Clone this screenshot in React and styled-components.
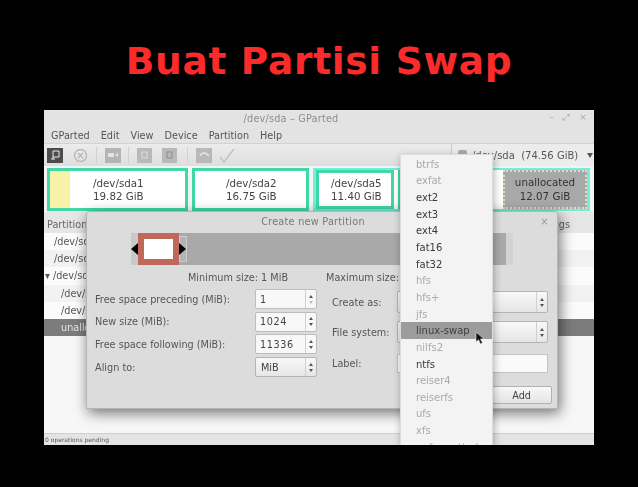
import styled, { createGlobalStyle } from "styled-components";

const Global = createGlobalStyle`
  html, body { margin: 0; padding: 0; background: #000; }
  body { font-family: "DejaVu Sans", sans-serif; overflow: hidden; }
`;

const Page = styled.div`
  width: 638px;
  height: 487px;
  background: #000;
  overflow: hidden;
`;

const Title = styled.h1`
  margin: 0;
  height: 110px;
  padding-top: 38px;
  box-sizing: border-box;
  text-align: center;
  color: #fb2b2b;
  font-size: 37.5px;
  line-height: 46px;
  font-weight: 700;
  letter-spacing: 0.7px;
`;

const Win = styled.div`
  position: relative;
  width: 550px;
  height: 335px;
  margin-left: 44px;
  background: #f6f6f6;
  display: flex;
  flex-direction: column;
  color: #4a4a4a;
  font-size: 9.7px;
  filter: blur(0.35px);
  overflow: hidden;
`;

const TitleBar = styled.div`
  height: 17px;
  flex: none;
  display: flex;
  align-items: center;
  justify-content: center;
  position: relative;
  box-sizing: border-box;
  padding-right: 56px;
  background: #e3e3e3;
  color: #8e8e8e;
  letter-spacing: 0.2px;
`;

const WinBtns = styled.div`
  position: absolute;
  right: 7px;
  top: 2px;
  display: flex;
  gap: 9px;
  color: #aaa;
  font-size: 9px;
`;

const MenuBar = styled.div`
  height: 16px;
  flex: none;
  display: flex;
  align-items: center;
  gap: 11px;
  padding-left: 7px;
  background: #e3e3e3;
  color: #555;
`;

const ToolBar = styled.div`
  height: 23px;
  flex: none;
  display: flex;
  align-items: center;
  padding-left: 3px;
  background: linear-gradient(#ececec, #dedede);
  border-top: 1px solid #d2d2d2;
  box-sizing: border-box;
`;

const Tool = styled.div`
  width: ${(p) => p.$w || 16}px;
  height: 15px;
  margin-right: ${(p) => p.$gap || 6}px;
  display: flex;
  align-items: center;
  justify-content: center;
  background: ${(p) => p.$bg || "transparent"};
  flex: none;
`;

const Sep = styled.div`
  width: 1px;
  height: 16px;
  background: #d0d0d0;
  margin-right: 8px;
`;

const DevicePicker = styled.div`
  margin-left: auto;
  width: 143px;
  height: 23px;
  box-sizing: border-box;
  padding-left: 6px;
  display: flex;
  align-items: center;
  gap: 5px;
  font-size: 10px;
  color: #555;
  white-space: pre;
  border-left: 1px solid #c8c8c8;
  background: #ececec;
`;

const DiskIcon = styled.div`
  width: 9px;
  height: 10px;
  flex: none;
  border-radius: 2px;
  background: #aaa;
`;

const PartBar = styled.div`
  height: 46px;
  flex: none;
  display: flex;
  padding: 2px 4px 1px 3px;
  box-sizing: border-box;
  gap: 4px;
  background: #f4f4f4;
`;

const Part = styled.div`
  position: relative;
  width: ${(p) => p.$w}px;
  box-sizing: border-box;
  flex: none;
  border: 3px solid #3fd8a6;
  background: #fff;
  padding: 1px 0 0 ${(p) => p.$pad}px;
  display: flex;
  flex-direction: column;
  justify-content: center;
  color: #444;
  font-size: 10.3px;
  line-height: 13.5px;
`;

const UsedArea = styled.div`
  position: absolute;
  left: 0;
  top: 0;
  bottom: 0;
  width: 20px;
  background: #f6f3a8;
`;

const Extended = styled.div`
  flex: 1;
  display: flex;
  gap: 4px;
  border: 2px solid #6ff0dc;
  border-width: 2px 3px;
  background: #fff;
`;

const Unallocated = styled.div`
  margin-left: auto;
  width: 84px;
  box-sizing: border-box;
  border: 2px dotted #e2dcb4;
  background: #a8a8a8;
  display: flex;
  flex-direction: column;
  align-items: center;
  justify-content: center;
  color: #333;
  font-size: 10.3px;
  line-height: 13.5px;
`;

const TableHead = styled.div`
  height: 21px;
  flex: none;
  box-sizing: border-box;
  display: flex;
  align-items: center;
  padding: 3px 24px 0 3px;
  background: #e6e6e6;
  color: #666;
  justify-content: space-between;
`;

const Row = styled.div`
  height: 17.2px;
  flex: none;
  display: flex;
  align-items: center;
  padding-left: ${(p) => p.$indent}px;
  background: ${(p) => (p.$selected ? "#7c7c7c" : p.$odd ? "#f2f2f2" : "#fbfbfb")};
  color: ${(p) => (p.$selected ? "#e8e8e8" : "#555")};
`;

const Spacer = styled.div`
  flex: 1;
  background: #f7f7f7;
`;

const StatusBar = styled.div`
  height: 12px;
  flex: none;
  border-top: 1px solid #cfcfcf;
  box-sizing: border-box;
  background: #e4e4e4;
  font-size: 6px;
  line-height: 11px;
  color: #555;
  padding-left: 1px;
`;

const Dialog = styled.div`
  position: absolute;
  left: 42px;
  top: 101px;
  width: 472px;
  height: 198px;
  box-sizing: border-box;
  background: #dcdcdc;
  border: 1px solid #b5b5b5;
  border-radius: 3px 3px 0 0;
  box-shadow: 2px 4px 14px rgba(0, 0, 0, 0.55);
  display: flex;
  flex-direction: column;
`;

const DialogTitle = styled.div`
  position: relative;
  height: 21px;
  flex: none;
  box-sizing: border-box;
  padding-right: 18px;
  text-align: center;
  line-height: 19px;
  color: #777;
  letter-spacing: 0.25px;
`;

const CloseX = styled.span`
  position: absolute;
  right: 8px;
  top: 0;
  color: #999;
  font-size: 10px;
`;

const Slider = styled.div`
  position: relative;
  height: 32px;
  flex: none;
  margin: 0 44px 0 44px;
  padding-left: 7px;
  background: linear-gradient(to right, #c9c9c9 7px, #a9a9a9 7px, #a9a9a9 375px, #d3d3d3 375px);
  display: flex;
`;

const SlideBox = styled.div`
  width: 41px;
  height: 32px;
  box-sizing: border-box;
  border: 6px solid #c0685c;
  background: #fff;
`;

const Handle = styled.div`
  position: absolute;
  left: 48px;
  top: 3px;
  width: 8px;
  height: 26px;
  box-sizing: border-box;
  background: #b4b4b4;
  border: 1px solid #cdcdcd;
`;

const Arrow = styled.div`
  position: absolute;
  top: 10px;
  ${(p) => (p.$right ? "left: 48px;" : "left: 0;")}
  width: 0;
  height: 0;
  border-top: 6px solid transparent;
  border-bottom: 6px solid transparent;
  ${(p) => (p.$right ? "border-left: 7px solid #000;" : "border-right: 7px solid #000;")}
`;

const SizeRow = styled.div`
  height: 22px;
  flex: none;
  display: flex;
  align-items: center;
  padding: 2px 0 0 101px;
  box-sizing: border-box;
  gap: 38px;
  color: #555;
`;

const Columns = styled.div`
  display: flex;
  flex: 1;
  padding: 0 6px 0 8px;
`;

const LeftCol = styled.div`
  width: 222px;
  flex: none;
  display: grid;
  grid-template-columns: 160px 62px;
  grid-auto-rows: 22.6px;
  align-items: center;
  align-content: start;
  padding-top: 1px;
`;

const RightCol = styled.div`
  position: relative;
  flex: 1;
  margin-left: 15px;
  display: grid;
  grid-template-columns: 65px 1fr;
  grid-template-rows: 30px 30px 33px;
  align-items: center;
  align-content: start;
  padding-right: 3px;
`;

const Label = styled.span`
  color: #555;
`;

const Spin = styled.div`
  width: 62px;
  height: 20px;
  box-sizing: border-box;
  display: flex;
  align-items: center;
  background: #f8f8f8;
  border: 1px solid #bdbdbd;
  border-radius: 2px;
  padding-left: 4px;
  color: #444;
  letter-spacing: ${(p) => (p.$wide ? "0.6px" : "0")};
`;

const SpinArrows = styled.div`
  margin-left: auto;
  width: 10px;
  height: 100%;
  flex: none;
  border-left: 1px solid #d0d0d0;
  display: flex;
  flex-direction: column;
  align-items: center;
  justify-content: center;
  gap: 3px;
`;

const Tri = styled.i`
  width: 0;
  height: 0;
  flex: none;
  border-left: 2.5px solid transparent;
  border-right: 2.5px solid transparent;
  ${(p) =>
    p.$down
      ? `border-top: 3px solid ${p.$dim ? "#bbb" : "#555"};`
      : `border-bottom: 3px solid ${p.$dim ? "#bbb" : "#555"};`}
`;

const DeviceArrow = styled(Tri)`
  margin-left: 4px;
  border-left-width: 3px;
  border-right-width: 3px;
  border-top-width: 5px;
`;

const Combo = styled.div`
  height: 22px;
  box-sizing: border-box;
  display: flex;
  align-items: center;
  justify-content: flex-end;
  background: linear-gradient(#f8f8f8, #e6e6e6);
  border: 1px solid #b5b5b5;
  border-radius: 2px;
  padding-left: 5px;
  color: #444;
`;

const AlignCombo = styled(Combo)`
  width: 62px;
  height: 20px;
  justify-content: space-between;
`;

const TextInput = styled.div`
  height: 19px;
  box-sizing: border-box;
  background: #fafafa;
  border: 1px solid #c4c4c4;
`;

const AddBtn = styled.div`
  position: absolute;
  right: -1px;
  top: 99px;
  width: 60px;
  height: 18px;
  box-sizing: border-box;
  display: flex;
  align-items: center;
  justify-content: flex-end;
  padding-right: 20px;
  background: linear-gradient(#f8f8f8, #e4e4e4);
  border: 1px solid #b2b2b2;
  border-radius: 2px;
  color: #444;
`;

const Menu = styled.div`
  position: absolute;
  left: 356px;
  top: 44px;
  width: 93px;
  bottom: 0;
  padding-top: 1px;
  background: #f3f3f3;
  border: 1px solid #dcdcdc;
  border-bottom: none;
  box-sizing: border-box;
  box-shadow: 1px 3px 8px rgba(0, 0, 0, 0.3);
  overflow: hidden;
`;

const MenuItem = styled.div`
  height: 16.65px;
  padding-left: 15px;
  display: flex;
  align-items: center;
  font-size: 10px;
  color: ${(p) => (p.$on ? "#3a3a3a" : "#aaa")};
  ${(p) => p.$hover && "background: #9c9c9c; color: #3f3f3f;"}
`;

const Cursor = styled.svg`
  position: absolute;
  left: 431px;
  top: 221px;
`;

const FS = [
  ["btrfs"], ["exfat"], ["ext2", 1], ["ext3", 1], ["ext4", 1], ["fat16", 1], ["fat32", 1],
  ["hfs"], ["hfs+"], ["jfs"], ["linux-swap", 1, 1], ["nilfs2"], ["ntfs", 1], ["reiser4"],
  ["reiserfs"], ["ufs"], ["xfs"], ["unformatted"],
];

const ROWS = [
  ["/dev/sda1", 10],
  ["/dev/sda2", 10],
  ["▾ /dev/sda3", 1],
  ["/dev/sda5", 17],
  ["/dev/sda6", 17],
  ["unallocated", 17],
];

function Spinner({ value, wide, dim }) {
  return (
    <Spin $wide={wide}>
      {value}
      <SpinArrows>
        <Tri />
        <Tri $down $dim={dim} />
      </SpinArrows>
    </Spin>
  );
}

function ComboArrows() {
  return (
    <SpinArrows>
      <Tri />
      <Tri $down />
    </SpinArrows>
  );
}

export default function App() {
  return (
    <Page>
      <Global />
      <Title>Buat Partisi Swap</Title>
      <Win>
        <TitleBar>
          /dev/sda – GParted
          <WinBtns>
            <span>–</span>
            <span>⤢</span>
            <span>×</span>
          </WinBtns>
        </TitleBar>
        <MenuBar>
          <span>GParted</span>
          <span>Edit</span>
          <span>View</span>
          <span>Device</span>
          <span>Partition</span>
          <span>Help</span>
        </MenuBar>
        <ToolBar>
          <Tool $bg="#4c4c4c" $gap={9}>
            <svg width="10" height="10" viewBox="0 0 10 10" fill="none" stroke="#eee">
              <path d="M3 1h6v6H3zM3 7v2M1 9h4" />
            </svg>
          </Tool>
          <Tool $gap={8}>
            <svg width="15" height="15" viewBox="0 0 15 15" fill="none" stroke="#b8b8b8" strokeWidth="1.4">
              <circle cx="7.5" cy="7.5" r="6" />
              <path d="M5 5l5 5M10 5l-5 5" />
            </svg>
          </Tool>
          <Sep />
          <Tool $bg="#b5b5b5" $gap={7}>
            <svg width="12" height="8" viewBox="0 0 12 8" fill="#e4e4e4">
              <path d="M1 2h6v4H1zM8 4l3-2v4z" />
            </svg>
          </Tool>
          <Sep />
          <Tool $bg="#b9b9b9" $w={15} $gap={10}>
            <svg width="7" height="8" viewBox="0 0 7 8" fill="none" stroke="#dedede">
              <rect x="1" y="1" width="5" height="6" />
            </svg>
          </Tool>
          <Tool $bg="#b9b9b9" $w={15} $gap={10}>
            <svg width="7" height="8" viewBox="0 0 7 8" fill="none" stroke="#8d8d8d">
              <rect x="1" y="1" width="5" height="6" />
            </svg>
          </Tool>
          <Sep />
          <Tool $bg="#b9b9b9" $gap={6}>
            <svg width="11" height="8" viewBox="0 0 11 8" fill="none" stroke="#e6e6e6" strokeWidth="1.4">
              <path d="M1 5c2-4 6-4 9 0" />
            </svg>
          </Tool>
          <Tool $w={18}>
            <svg width="18" height="17" viewBox="0 0 18 17" fill="none" stroke="#c4c4c4" strokeWidth="1.6">
              <path d="M2 10l4 5L16 2" />
            </svg>
          </Tool>
          <DevicePicker>
            <DiskIcon />
            <span>/dev/sda  (74.56 GiB)</span>
            <DeviceArrow $down />
          </DevicePicker>
        </ToolBar>
        <PartBar>
          <Part $w={141} $pad={43}>
            <UsedArea />
            <span>/dev/sda1</span>
            <span>19.82 GiB</span>
          </Part>
          <Part $w={117} $pad={31}>
            <span>/dev/sda2</span>
            <span>16.75 GiB</span>
          </Part>
          <Extended>
            <Part $w={78} $pad={12}>
              <span>/dev/sda5</span>
              <span>11.40 GiB</span>
            </Part>
            <Part $w={88} $pad={12} />
            <Unallocated>
              <span>unallocated</span>
              <span>12.07 GiB</span>
            </Unallocated>
          </Extended>
        </PartBar>
        <TableHead>
          <span>Partition</span>
          <span>Flags</span>
        </TableHead>
        {ROWS.map(([name, indent], i) => (
          <Row key={name} $indent={indent} $odd={i % 2 === 1} $selected={i === 5}>
            {name}
          </Row>
        ))}
        <Spacer />
        <StatusBar>0 operations pending</StatusBar>

        <Dialog>
          <DialogTitle>
            Create new Partition
            <CloseX>×</CloseX>
          </DialogTitle>
          <Slider>
            <SlideBox />
            <Handle />
            <Arrow />
            <Arrow $right />
          </Slider>
          <SizeRow>
            <span>Minimum size: 1 MiB</span>
            <span>Maximum size: 12 GiB</span>
          </SizeRow>
          <Columns>
            <LeftCol>
              <Label>Free space preceding (MiB):</Label>
              <Spinner value="1" dim />
              <Label>New size (MiB):</Label>
              <Spinner value="1024" wide />
              <Label>Free space following (MiB):</Label>
              <Spinner value="11336" wide />
              <Label>Align to:</Label>
              <AlignCombo>
                <span>MiB</span>
                <ComboArrows />
              </AlignCombo>
            </LeftCol>
            <RightCol>
              <Label>Create as:</Label>
              <Combo>
                <ComboArrows />
              </Combo>
              <Label>File system:</Label>
              <Combo>
                <ComboArrows />
              </Combo>
              <Label>Label:</Label>
              <TextInput />
              <AddBtn>Add</AddBtn>
            </RightCol>
          </Columns>
        </Dialog>

        <Menu>
          {FS.map(([name, on, hover]) => (
            <MenuItem key={name} $on={on} $hover={hover}>
              {name}
            </MenuItem>
          ))}
        </Menu>
        <Cursor width="10" height="14" viewBox="0 0 10 14">
          <path d="M1 1v10l2.5-2.2L5.5 13l2-1-2-4H9z" fill="#111" stroke="#eee" strokeWidth="0.6" />
        </Cursor>
      </Win>
    </Page>
  );
}
